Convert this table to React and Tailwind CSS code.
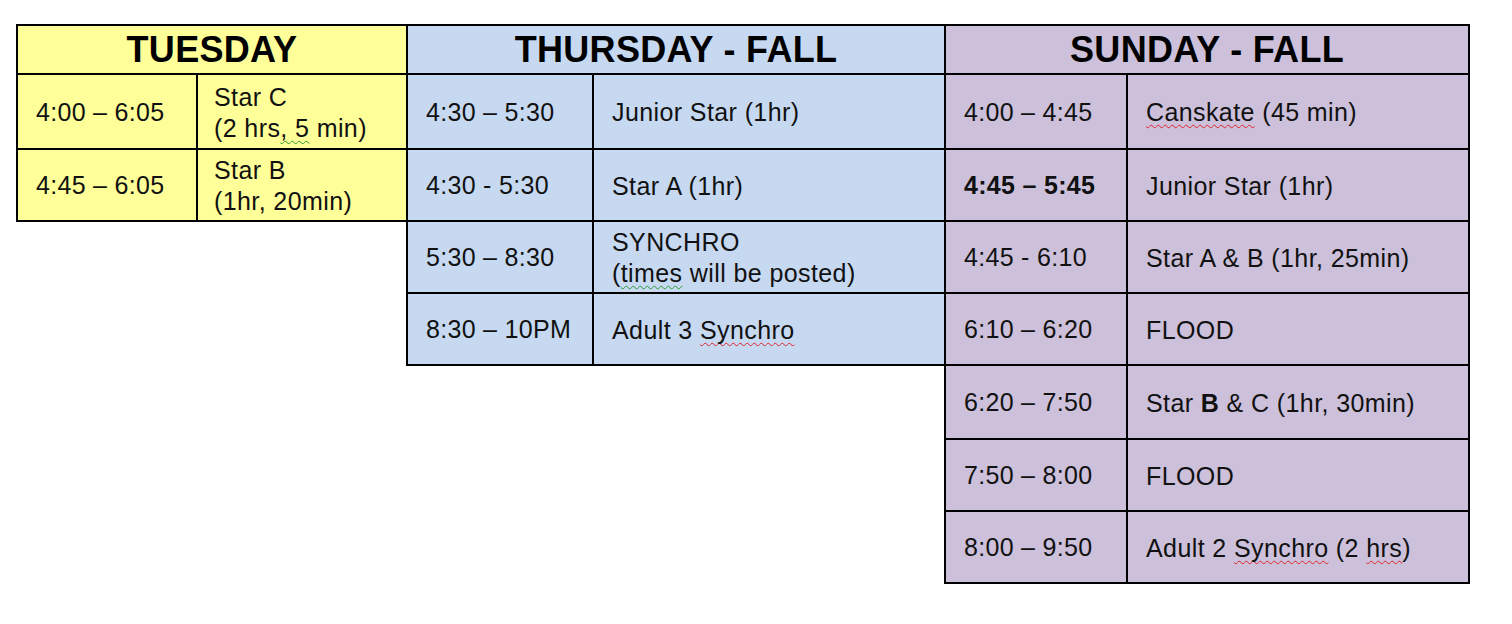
import React from 'react'

function Flag({ children, green }) {
  return (
    <span
      className={
        green
          ? 'underline decoration-wavy decoration-[#2f9a35] decoration-1 underline-offset-[3px] [text-decoration-skip-ink:none]'
          : 'underline decoration-wavy decoration-[#e0242b] decoration-1 underline-offset-[3px] [text-decoration-skip-ink:none]'
      }
    >
      {children}
    </span>
  )
}

const sections = [
  {
    title: 'TUESDAY',
    box: 'w-[392px] bg-[#ffff99]',
    timeCol: 'w-[180px] pl-[18px]',
    actPad: 'pl-[16px]',
    rows: [
      {
        h: 'h-[75px]',
        time: '4:00 – 6:05',
        act: (
          <>
            Star C
            <br />
            (2 hrs<Flag green>, 5</Flag> min)
          </>
        ),
      },
      {
        h: 'h-[72px]',
        time: '4:45 – 6:05',
        act: (
          <>
            Star B
            <br />
            (1hr, 20min)
          </>
        ),
      },
    ],
  },
  {
    title: 'THURSDAY - FALL',
    box: 'w-[540px] -ml-[2px] bg-[#c6d9f1]',
    timeCol: 'w-[186px] pl-[18px]',
    actPad: 'pl-[18px]',
    rows: [
      { h: 'h-[75px]', time: '4:30 – 5:30', act: 'Junior Star (1hr)' },
      { h: 'h-[72px]', time: '4:30 - 5:30', act: 'Star A (1hr)' },
      {
        h: 'h-[72px]',
        time: '5:30 – 8:30',
        act: (
          <>
            SYNCHRO
            <br />(<Flag green>times</Flag> will be posted)
          </>
        ),
      },
      {
        h: 'h-[72px]',
        time: '8:30 – 10PM',
        act: (
          <>
            Adult 3 <Flag>Synchro</Flag>
          </>
        ),
      },
    ],
  },
  {
    title: 'SUNDAY - FALL',
    box: 'w-[526px] -ml-[2px] bg-[#ccc0da]',
    timeCol: 'w-[182px] pl-[18px]',
    actPad: 'pl-[18px]',
    rows: [
      {
        h: 'h-[75px]',
        time: '4:00 – 4:45',
        act: (
          <>
            <Flag>Canskate</Flag> (45 min)
          </>
        ),
      },
      { h: 'h-[72px]', time: <b>4:45 – 5:45</b>, act: 'Junior Star (1hr)' },
      { h: 'h-[72px]', time: '4:45 - 6:10', act: 'Star A & B (1hr, 25min)' },
      { h: 'h-[72px]', time: '6:10 – 6:20', act: 'FLOOD' },
      {
        h: 'h-[74px]',
        time: '6:20 – 7:50',
        act: (
          <>
            Star <b>B</b> &amp; C (1hr, 30min)
          </>
        ),
      },
      { h: 'h-[72px]', time: '7:50 – 8:00', act: 'FLOOD' },
      {
        h: 'h-[72px]',
        time: '8:00 – 9:50',
        act: (
          <>
            Adult 2 <Flag>Synchro</Flag> (2 <Flag>hrs</Flag>)
          </>
        ),
      },
    ],
  },
]

export default function App() {
  return (
    <div className="min-h-[624px] w-[1512px] bg-white pl-4 pt-6 font-['Liberation_Sans',Arial,sans-serif] text-[#111]">
      <div className="flex items-start">
        {sections.map((s) => (
          <div key={s.title} className={`${s.box} border-2 border-black`}>
            <div className="flex h-[47px] items-center justify-center pt-[1px] text-[36px] font-bold leading-none tracking-[0.3px] text-black">
              {s.title}
            </div>
            {s.rows.map((r, i) => (
              <div key={i} className={`${r.h} flex border-t-2 border-black`}>
                <div className={`${s.timeCol} flex shrink-0 items-center border-r-2 border-black pt-[2px] text-[25px] tracking-[0.3px]`}>
                  {r.time}
                </div>
                <div className={`${s.actPad} flex flex-1 items-center pt-[2px] text-[25px] leading-[31px] tracking-[0.4px]`}>
                  <div>{r.act}</div>
                </div>
              </div>
            ))}
          </div>
        ))}
      </div>
    </div>
  )
}
